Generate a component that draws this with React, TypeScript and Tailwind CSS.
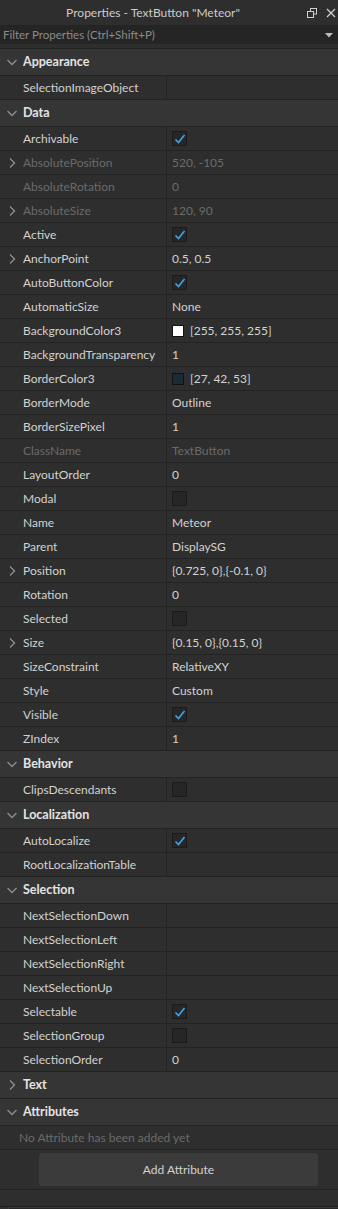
import React from 'react';

type Kind = 'text' | 'check' | 'uncheck' | 'color' | 'empty';

interface Prop {
  name: string;
  value?: string;
  kind?: Kind;
  expand?: boolean;
  disabled?: boolean;
  swatch?: string;
}

const font = { fontFamily: 'Lato, "Noto Sans", sans-serif' };

function Chevron({ open }: { open: boolean }) {
  return (
    <svg width="12" height="12" viewBox="0 0 12 12" className="shrink-0">
      {open ? (
        <path d="M1.5 4 L6 8.5 L10.5 4" fill="none" stroke="#8f8f8f" strokeWidth="1.3" />
      ) : (
        <path d="M4 1.5 L8.5 6 L4 10.5" fill="none" stroke="#8f8f8f" strokeWidth="1.3" />
      )}
    </svg>
  );
}

function Checkbox({ checked }: { checked: boolean }) {
  return (
    <div className="w-[15px] h-[15px] bg-[#262626] border border-[#1b1b1b] flex items-center justify-center">
      {checked && (
        <svg width="12" height="12" viewBox="0 0 12 12">
          <path d="M1.5 6.5 L4.5 9.5 L10.5 2" fill="none" stroke="#3aa7ef" strokeWidth="1.6" />
        </svg>
      )}
    </div>
  );
}

function Section({ title, open = true }: { title: string; open?: boolean }) {
  return (
    <div className="h-[27px] bg-[#353535] border-b border-[#232323] flex items-center">
      <div className="w-[23px] flex justify-center">
        <Chevron open={open} />
      </div>
      <span className="text-[12.5px] font-bold text-[#e4e4e4]">{title}</span>
    </div>
  );
}

function Row({ p }: { p: Prop }) {
  const kind = p.kind ?? 'text';
  const txt = p.disabled ? 'text-[#6b6b6b]' : 'text-[#d2d2d2]';
  return (
    <div className="h-[24px] bg-[#2e2e2e] border-b border-[#232323] flex">
      <div className="w-[167px] shrink-0 overflow-hidden flex items-center border-r border-[#232323]">
        <div className="w-[23px] shrink-0 flex justify-center">
          {p.expand && <Chevron open={false} />}
        </div>
        <span className={`text-[12px] whitespace-nowrap ${txt}`}>{p.name}</span>
      </div>
      <div className="flex-1 flex items-center pl-[5px]">
        {kind === 'text' && <span className={`text-[12px] ${txt}`}>{p.value}</span>}
        {kind === 'check' && <Checkbox checked />}
        {kind === 'uncheck' && <Checkbox checked={false} />}
        {kind === 'color' && (
          <div className="flex items-center gap-[6px]">
            <div
              className="w-[12px] h-[12px] border border-[#111]"
              style={{ backgroundColor: p.swatch }}
            />
            <span className="text-[12px] text-[#d2d2d2]">{p.value}</span>
          </div>
        )}
      </div>
    </div>
  );
}

const data: Prop[] = [
  { name: 'Archivable', kind: 'check' },
  { name: 'AbsolutePosition', value: '520, -105', expand: true, disabled: true },
  { name: 'AbsoluteRotation', value: '0', disabled: true },
  { name: 'AbsoluteSize', value: '120, 90', expand: true, disabled: true },
  { name: 'Active', kind: 'check' },
  { name: 'AnchorPoint', value: '0.5, 0.5', expand: true },
  { name: 'AutoButtonColor', kind: 'check' },
  { name: 'AutomaticSize', value: 'None' },
  { name: 'BackgroundColor3', kind: 'color', value: '[255, 255, 255]', swatch: '#ffffff' },
  { name: 'BackgroundTransparency', value: '1' },
  { name: 'BorderColor3', kind: 'color', value: '[27, 42, 53]', swatch: '#1b2a35' },
  { name: 'BorderMode', value: 'Outline' },
  { name: 'BorderSizePixel', value: '1' },
  { name: 'ClassName', value: 'TextButton', disabled: true },
  { name: 'LayoutOrder', value: '0' },
  { name: 'Modal', kind: 'uncheck' },
  { name: 'Name', value: 'Meteor' },
  { name: 'Parent', value: 'DisplaySG' },
  { name: 'Position', value: '{0.725, 0},{-0.1, 0}', expand: true },
  { name: 'Rotation', value: '0' },
  { name: 'Selected', kind: 'uncheck' },
  { name: 'Size', value: '{0.15, 0},{0.15, 0}', expand: true },
  { name: 'SizeConstraint', value: 'RelativeXY' },
  { name: 'Style', value: 'Custom' },
  { name: 'Visible', kind: 'check' },
  { name: 'ZIndex', value: '1' },
];

const selection: Prop[] = [
  { name: 'NextSelectionDown', kind: 'empty' },
  { name: 'NextSelectionLeft', kind: 'empty' },
  { name: 'NextSelectionRight', kind: 'empty' },
  { name: 'NextSelectionUp', kind: 'empty' },
  { name: 'Selectable', kind: 'check' },
  { name: 'SelectionGroup', kind: 'uncheck' },
  { name: 'SelectionOrder', value: '0' },
];

export default function App() {
  return (
    <div className="w-[338px] h-[1209px] bg-[#2e2e2e] flex flex-col overflow-hidden" style={font}>
      {/* title bar */}
      <div className="h-[26px] bg-[#2e2e2e] border-b border-[#232323] flex items-center relative">
        <span className="flex-1 text-center text-[12px] text-[#cccccc] pr-[32px]">
          Properties - TextButton "Meteor"
        </span>
        <div className="absolute right-[2px] top-[8px] flex items-center gap-[9px]">
          <svg width="10" height="10" viewBox="0 0 10 10">
            <rect x="3.5" y="0.5" width="6" height="5.5" fill="none" stroke="#cfcfcf" />
            <rect x="0.5" y="3.5" width="6" height="6" fill="#2e2e2e" stroke="#cfcfcf" />
          </svg>
          <svg width="10" height="10" viewBox="0 0 10 10">
            <path d="M1 1 L9 9 M9 1 L1 9" stroke="#cfcfcf" strokeWidth="1.3" />
          </svg>
        </div>
      </div>
      {/* filter */}
      <div className="h-[18px] bg-[#252525] flex items-center justify-between px-[3px]">
        <span className="text-[11.5px] text-[#8c8c8c]">Filter Properties (Ctrl+Shift+P)</span>
        <svg width="8" height="5" viewBox="0 0 8 5" className="mr-[2px]">
          <path d="M0 0 L8 0 L4 4.5 Z" fill="#bdbdbd" />
        </svg>
      </div>
      <div className="h-[5px] border-b border-[#232323]" />

      <Section title="Appearance" />
      <Row p={{ name: 'SelectionImageObject', kind: 'empty' }} />
      <Section title="Data" />
      {data.map((p) => (
        <Row key={p.name} p={p} />
      ))}
      <Section title="Behavior" />
      <Row p={{ name: 'ClipsDescendants', kind: 'uncheck' }} />
      <Section title="Localization" />
      <Row p={{ name: 'AutoLocalize', kind: 'check' }} />
      <Row p={{ name: 'RootLocalizationTable', kind: 'empty' }} />
      <Section title="Selection" />
      {selection.map((p) => (
        <Row key={p.name} p={p} />
      ))}
      <Section title="Text" open={false} />
      <Section title="Attributes" />
      <div className="h-[24px] border-b border-[#232323] flex items-center pl-[19px]">
        <span className="text-[12px] text-[#6b6b6b]">No Attribute has been added yet</span>
      </div>
      <div className="pt-[3px] pb-[3px] border-b border-[#232323] flex pl-[39px]">
        <div className="w-[279px] h-[33px] rounded-[3px] bg-[#3b3b3b] flex items-center justify-center">
          <span className="text-[12px] text-[#d2d2d2]">Add Attribute</span>
        </div>
      </div>
      <div className="h-[17px] border-b border-[#1f1f1f]" />
      <div className="flex-1 bg-[#262626] ml-[8px] border-l border-t border-[#3a3a3a]" />
    </div>
  );
}
